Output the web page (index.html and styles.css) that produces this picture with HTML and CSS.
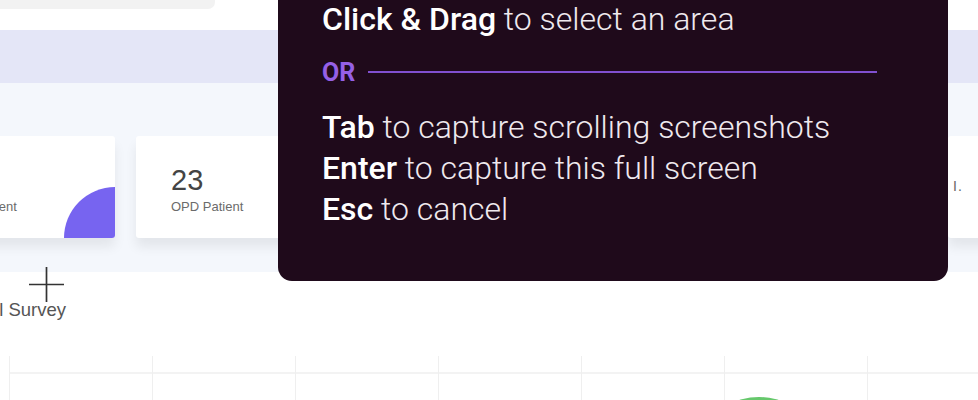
FILE: index.html
```html
<!DOCTYPE html>
<html lang="en">
<head>
<meta charset="utf-8">
<title>Dashboard capture</title>
<link rel="stylesheet" href="styles.css">
</head>
<body>
<div class="page">
  <header class="topbar"><div class="search"></div></header>
  <div class="band"></div>
  <section class="stats">
    <div class="card card-ipd">
      <div class="num">41</div>
      <div class="label">IPD Patient</div>
      <div class="quarter"></div>
    </div>
    <div class="card card-opd">
      <div class="num">23</div>
      <div class="label">OPD Patient</div>
    </div>
    <div class="spacer"></div>
    <div class="card card-edge"><span class="edge-text">I.</span></div>
  </section>
  <section class="survey">
    <div class="survey-title"><h2>Overall Survey</h2></div>
    <div class="chart">
      <div class="grid">
        <div class="col"><div class="cell"></div></div>
        <div class="col"><div class="cell"></div></div>
        <div class="col"><div class="cell"></div></div>
        <div class="col"><div class="cell"></div></div>
        <div class="col"><div class="cell"></div></div>
        <div class="col"><div class="cell"></div></div>
        <div class="col"><div class="cell"></div></div>
      </div>
      <div class="bubble"></div>
    </div>
  </section>

  <div class="capture">
    <p class="line"><b>Click &amp; Drag</b> to select an area</p>
    <div class="or-row"><span class="or">OR</span><span class="rule"></span></div>
    <p class="line line-tab"><b>Tab</b> to capture scrolling screenshots</p>
    <p class="line"><b>Enter</b> to capture this full screen</p>
    <p class="line"><b>Esc</b> to cancel</p>
  </div>

  <svg class="cursor" width="35" height="35" viewBox="0 0 35 35" aria-hidden="true">
    <line x1="17.5" y1="0" x2="17.5" y2="35" stroke="#333333" stroke-width="1.7"/>
    <line x1="0" y1="17.5" x2="35" y2="17.5" stroke="#333333" stroke-width="1.7"/>
  </svg>
</div>
</body>
</html>
```
FILE: styles.css
```css
* { box-sizing: border-box; }
html, body { margin: 0; padding: 0; }
body {
  width: 978px;
  height: 400px;
  overflow: hidden;
  background: #ffffff;
  font-family: "Liberation Sans", Arial, sans-serif;
}
.page {
  position: relative;
  width: 978px;
  height: 400px;
  overflow: hidden;
}
.topbar {
  height: 30px;
  background: #ffffff;
}
.search {
  width: 215px;
  height: 9px;
  background: #f2f2f2;
  border-bottom-right-radius: 7px;
}
.band {
  height: 53px;
  background: #e4e6f7;
}
.stats {
  height: 189px;
  background: #f4f7fc;
  padding-top: 53px;
  display: flex;
  gap: 21px;
}
.card {
  position: relative;
  height: 102px;
  background: #ffffff;
  border-radius: 3px;
  box-shadow: 0 9px 12px rgba(0, 0, 0, 0.07);
  padding: 28px 0 0 35px;
  overflow: hidden;
  flex: none;
}
.card-ipd { width: 199px; margin-left: -84px; }
.card-opd { width: 170px; }
.spacer { flex: 1; }
.card-edge { width: 60px; margin-right: -30px; padding: 41px 0 0 5px; }
.edge-text { font-size: 14px; color: #666; letter-spacing: 1px; }
.num {
  font-size: 29px;
  line-height: 32px;
  color: #444444;
}
.label {
  margin-top: 3px;
  font-size: 13px;
  line-height: 16px;
  color: #6b6b6b;
}
.quarter {
  position: absolute;
  right: 0;
  bottom: 0;
  width: 51px;
  height: 51px;
  background: #7764f0;
  border-top-left-radius: 51px;
}
.survey {
  height: 128px;
}
.survey-title {
  width: 66px;
  display: flex;
  justify-content: flex-end;
  padding-top: 27px;
}
.survey-title h2 {
  margin: 0;
  font-size: 18.5px;
  line-height: 22px;
  font-weight: 400;
  color: #555555;
  white-space: nowrap;
}
.chart {
  position: relative;
  margin-top: 35px;
  height: 44px;
  padding-left: 9px;
}
.grid {
  display: flex;
  height: 100%;
}
.col {
  width: 143px;
  flex: none;
  border-left: 1px solid #efefef;
}
.cell {
  height: 18px;
  border-bottom: 2px solid #f3f3f3;
}
.bubble {
  position: absolute;
  left: 714px;
  top: 41px;
  width: 90px;
  height: 60px;
  border-radius: 50%;
  background: #66c86c;
}
.capture {
  position: absolute;
  left: 278px;
  top: -40px;
  width: 670px;
  height: 321px;
  background: #1f0a1b;
  border-radius: 14px;
  padding: 39px 71px 0 44px;
  font-family: Roboto, "Liberation Sans", sans-serif;
  color: #efe9ee;
}
.line {
  margin: 0;
  font-size: 32px;
  line-height: 41px;
  white-space: nowrap;
  font-weight: 300;
}
.line b { font-weight: 500; color: #ffffff; }
.or-row {
  margin-top: 18px;
  height: 28px;
  display: flex;
  align-items: center;
  gap: 13px;
}
.or {
  font-size: 25px;
  font-weight: 700;
  color: #9560e6;
}
.rule {
  flex: 1;
  height: 2px;
  background: #8150d0;
}
.line-tab { margin-top: 21px; }
.cursor {
  position: absolute;
  left: 29px;
  top: 267px;
}
```
